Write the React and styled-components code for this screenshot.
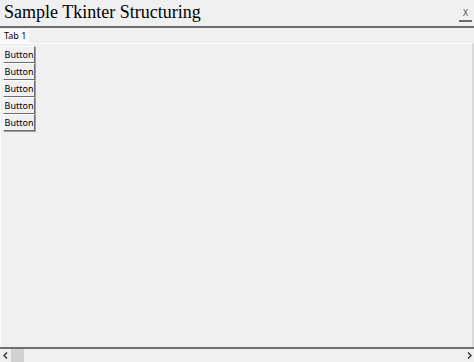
import React from 'react';
import styled, {createGlobalStyle} from 'styled-components';

const GlobalStyle = createGlobalStyle`
    html, body {
        margin: 0;
        padding: 0;
        background: #f0f0f0;
    }
    #root {
        width: 474px;
        height: 362px;
    }
`;

const Window = styled.div`
    display: flex;
    flex-direction: column;
    width: 474px;
    height: 362px;
    background: #f0f0f0;
    overflow: hidden;
`;

const TitleBar = styled.div`
    display: flex;
    align-items: flex-start;
    justify-content: space-between;
    height: 26px;
    padding: 0 2px 0 4px;
`;

const Title = styled.div`
    font-family: "Liberation Serif", "Times New Roman", serif;
    font-size: 18px;
    line-height: 26px;
    color: #000;
    margin-top: -1px;
`;

const CloseButton = styled.div`
    width: 13px;
    height: 14px;
    margin-top: 6px;
    display: flex;
    align-items: center;
    justify-content: center;
    font-family: "DejaVu Sans", sans-serif;
    font-size: 8px;
    color: #555;
    border-bottom: 2px solid #6d6d6d;
`;

const Rule = styled.div`
    height: 2px;
    background: #6e6e6e;
`;

const Notebook = styled.div`
    flex: 1;
    display: flex;
    flex-direction: column;
    padding-top: 1px;
`;

const TabRow = styled.div`
    display: flex;
    height: 14px;
`;

const Tab = styled.div`
    padding: 0 3px 0 4px;
    background: #fafafa;
    font-family: "Noto Sans", "DejaVu Sans", sans-serif;
    font-size: 9px;
    line-height: 14px;
    color: #000;
`;

const TabPanel = styled.div`
    flex: 1;
    display: flex;
    flex-direction: column;
    align-items: flex-start;
    padding: 2px 0 0 2px;
    border-top: 1px solid #fafafa;
    border-left: 1px solid #fafafa;
    border-right: 2px solid #dadada;
`;

const PanelButton = styled.div`
    width: 30px;
    height: 15px;
    background: #f0f0f0;
    border-top: 1px solid #ffffff;
    border-left: 1px solid #ffffff;
    border-right: 1px solid #6d6d6d;
    border-bottom: 1px solid #6d6d6d;
    box-shadow: 1px 1px 0 #a0a0a0;
    display: flex;
    align-items: center;
    justify-content: center;
    font-family: "Noto Sans", "DejaVu Sans", sans-serif;
    font-size: 9px;
    color: #000;
`;

const ScrollBar = styled.div`
    display: flex;
    align-items: center;
    height: 13px;
    background: #f0f0f0;
`;

const Arrow = styled.div`
    width: 10px;
    height: 13px;
    display: flex;
    align-items: center;
    justify-content: center;
`;

const Thumb = styled.div`
    width: 13px;
    height: 13px;
    background: #d2d2d2;
    margin-left: 1px;
`;

const Track = styled.div`
    flex: 1;
`;

const Chevron = ({dir}) => (
    <svg width="5" height="7" viewBox="0 0 5 7">
        <path
            d={dir === 'left' ? 'M4 0.5 L1 3.5 L4 6.5' : 'M1 0.5 L4 3.5 L1 6.5'}
            fill="none"
            stroke="#333"
            strokeWidth="1.4"
        />
    </svg>
);

const App = () => {
    return (
        <Window>
            <GlobalStyle />
            <TitleBar>
                <Title>Sample Tkinter Structuring</Title>
                <CloseButton>X</CloseButton>
            </TitleBar>
            <Rule />
            <Notebook>
                <TabRow>
                    <Tab>Tab 1</Tab>
                </TabRow>
                <TabPanel>
                    {[0, 1, 2, 3, 4].map((i) => (
                        <PanelButton key={i}>Button</PanelButton>
                    ))}
                </TabPanel>
            </Notebook>
            <Rule />
            <ScrollBar>
                <Arrow><Chevron dir="left" /></Arrow>
                <Thumb />
                <Track />
                <Arrow><Chevron dir="right" /></Arrow>
            </ScrollBar>
        </Window>
    );
};

export default App;
